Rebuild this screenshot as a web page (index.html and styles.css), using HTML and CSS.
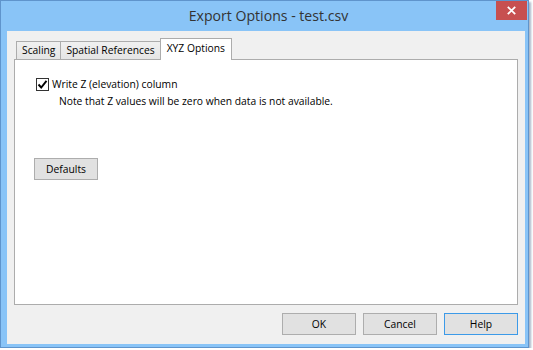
FILE: index.html
```html
<!DOCTYPE html>
<html>
<head>
<meta charset="utf-8">
<link rel="stylesheet" href="styles.css">
</head>
<body>
<div class="window">
  <div class="titlebar">
    <div class="title">Export Options - test.csv</div>
    <div class="close">
      <svg width="9" height="9" viewBox="0 0 9 9"><path d="M0.8 0.8 L8.2 8.2 M8.2 0.8 L0.8 8.2" stroke="#fff" stroke-width="1.8" fill="none"/></svg>
    </div>
  </div>
  <div class="client">
    <div class="tabs">
      <div class="tab">Scaling</div>
      <div class="tab">Spatial References</div>
      <div class="tab active">XYZ Options</div>
    </div>
    <div class="panel">
      <div class="check-row">
        <span class="checkbox">
          <svg width="11" height="11" viewBox="0 0 11 11"><path d="M1.5 5.5 L4.2 8.5 L9.5 1.8" stroke="#000" stroke-width="1.9" fill="none"/></svg>
        </span>
        <span class="label">Write Z (elevation) column</span>
      </div>
      <div class="note">Note that Z values will be zero when data is not available.</div>
      <div class="btn defaults">Defaults</div>
    </div>
    <div class="footer">
      <div class="btn">OK</div>
      <div class="btn">Cancel</div>
      <div class="btn focused">Help</div>
    </div>
  </div>
</div>
</body>
</html>
```

FILE: styles.css
```css
html, body {
  margin: 0;
  padding: 0;
  background: #ffffff;
}

body {
  font-family: "Open Sans", "Noto Sans", sans-serif;
  font-size: 10.3px;
  color: #000;
}

.window {
  box-sizing: border-box;
  width: 529px;
  height: 348px;
  border: 1px solid #5f94cc;
  background: #89c4f7;
  box-shadow: 2px 2px 2px rgba(60, 90, 130, 0.45);
  display: flex;
  flex-direction: column;
}

.titlebar {
  height: 30px;
  display: grid;
  grid-template-columns: 1fr auto 1fr;
  align-items: start;
}

.title {
  grid-column: 2;
  font-size: 14.1px;
  color: #333;
  line-height: 20px;
  padding-top: 5px;
  padding-left: 8px;
}

.close {
  grid-column: 3;
  justify-self: end;
  width: 31px;
  height: 19px;
  margin-right: 1px;
  background: #c75050;
  display: flex;
  align-items: center;
  justify-content: center;
}

.client {
  flex: 1;
  margin: 0 3px 3px 6px;
  background: #f0f0f0;
  padding: 7px 7px 8px 7px;
  display: flex;
  flex-direction: column;
}

.tabs {
  display: flex;
  align-items: flex-end;
  padding-left: 2px;
  height: 21px;
  position: relative;
  z-index: 1;
}

.tab {
  box-sizing: border-box;
  height: 18px;
  border: 1px solid #acacac;
  border-bottom: none;
  background: linear-gradient(#f0f0f0, #e5e5e5);
  padding: 0 5px;
  line-height: 16px;
  margin-left: -1px;
  white-space: nowrap;
}

.tab:first-child {
  margin-left: 0;
}

.tab.active {
  height: 22px;
  margin-bottom: -1px;
  background: #fff;
  padding: 0 6px;
  line-height: 18px;
}

.panel {
  box-sizing: border-box;
  height: 246px;
  border: 1px solid #acacac;
  background: #fff;
  padding: 17px 0 0 21px;
  display: flex;
  flex-direction: column;
  align-items: flex-start;
}

.check-row {
  display: flex;
  align-items: center;
  gap: 3px;
  height: 14px;
}

.checkbox {
  box-sizing: border-box;
  width: 13px;
  height: 13px;
  border: 1px solid #333;
  background: #fff;
  display: flex;
  align-items: center;
  justify-content: center;
}

.label {
  line-height: 14px;
}

.note {
  margin-left: 23px;
  margin-top: 2px;
  line-height: 16px;
}

.btn {
  box-sizing: border-box;
  width: 74px;
  height: 22px;
  border: 1px solid #adadad;
  background: #e1e1e1;
  display: flex;
  align-items: center;
  justify-content: center;
  color: #000;
}

.btn.defaults {
  width: 64px;
  margin-top: 49px;
  margin-left: -2px;
}

.btn.focused {
  border-color: #3c9ae8;
}

.footer {
  margin-top: 8px;
  display: flex;
  justify-content: flex-end;
  gap: 7px;
  padding-right: 0;
}
```
